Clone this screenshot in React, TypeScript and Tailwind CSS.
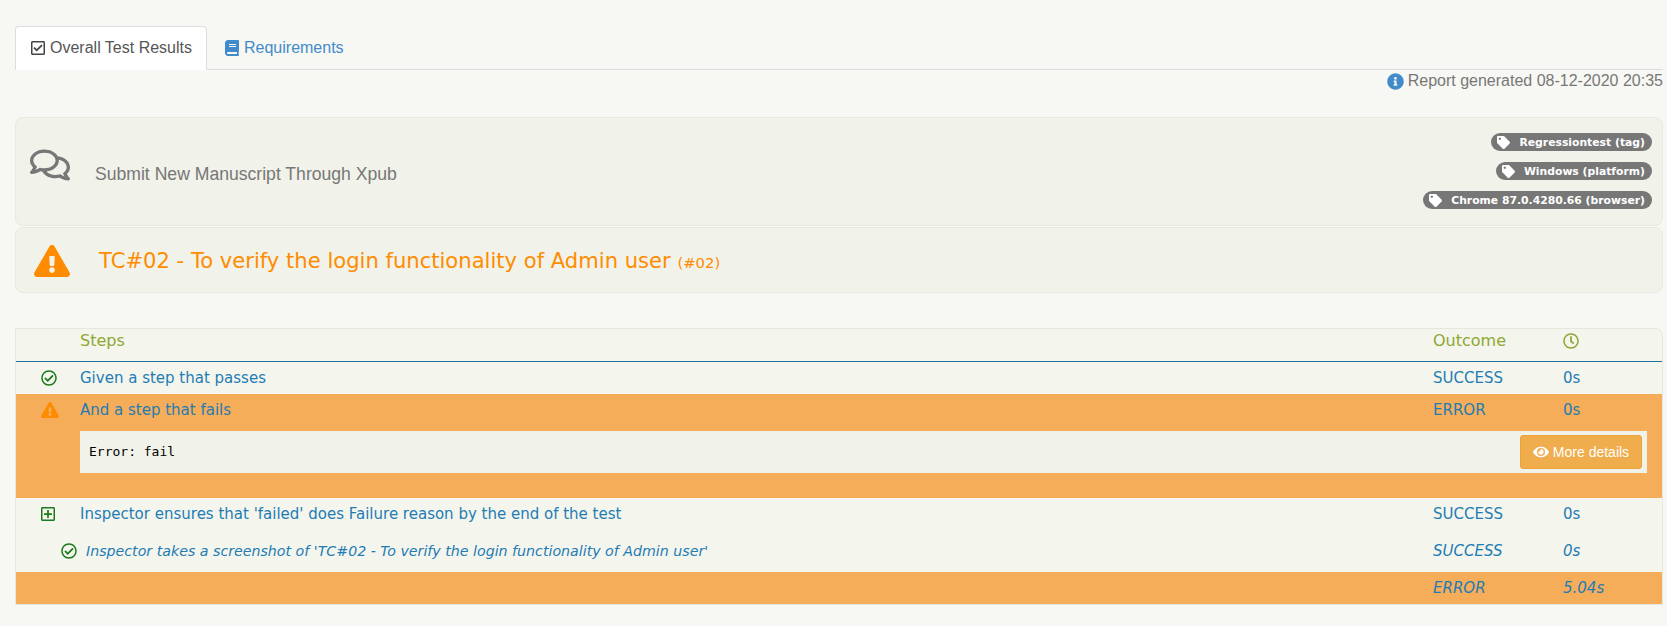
import { FaBook, FaExclamationTriangle, FaEye, FaInfoCircle, FaRegCheckCircle, FaRegCheckSquare, FaRegClock, FaRegComments, FaRegPlusSquare, FaTag } from "react-icons/fa";

const tags = ["Regressiontest (tag)", "Windows (platform)", "Chrome 87.0.4280.66 (browser)"];

function Row({ icon, label, outcome, time, italic, className }: { icon?: React.ReactNode; label?: string; outcome: string; time: React.ReactNode; italic?: boolean; className?: string }) {
  return (
    <div className={`flex items-center ${italic ? "italic" : ""} ${className ?? ""}`}>
      <div className="w-[64px] shrink-0 flex justify-center">{icon}</div>
      <div className="flex-1">{label}</div>
      <div className="w-[130px] shrink-0">{outcome}</div>
      <div className="w-[99px] shrink-0">{time}</div>
    </div>
  );
}

export default function App() {
  return (
    <div className="min-h-screen bg-[#f7f8f3] pl-[15px] pr-[4px] pt-[26px] font-['Liberation_Sans',sans-serif] text-[16px] text-[#333]">
      <div className="flex h-[44px] border-b border-[#ddd]">
        <div className="h-[44px] w-[192px] flex items-center gap-[4px] pl-[14px] pb-[1px] bg-white border border-b-0 border-[#ddd] rounded-t-[4px] text-[#555]">
          <FaRegCheckSquare className="text-[16px] text-[#444]" />
          Overall Test Results
        </div>
        <div className="flex items-center gap-[4px] pl-[17px] text-[#428bca]">
          <FaBook className="text-[16px]" />
          Requirements
        </div>
      </div>

      <div className="flex justify-end items-center gap-[4px] h-[22px] text-[#777]">
        <FaInfoCircle className="text-[17px] text-[#428bca]" />
        Report generated 08-12-2020 20:35
      </div>

      <div className="mt-[25px] h-[109px] flex items-center justify-between bg-[#f1f2e9] border border-[#e8e9e0] rounded-[8px] pl-[14px] pr-[10px]">
        <div className="flex items-center">
          <FaRegComments className="text-[40px] text-[#777] -mt-[12px]" />
          <span className="ml-[25px] pt-[6px] text-[17.6px] text-[#777]">Submit New Manuscript Through Xpub</span>
        </div>
        <div className="flex flex-col items-end gap-[11px] pb-[1px]">
          {tags.map((t) => (
            <span key={t} className="flex items-center gap-[9px] h-[18px] pl-[6px] pr-[7px] rounded-full bg-[#777] text-white text-[10.8px] font-bold font-['DejaVu_Sans',sans-serif]">
              <FaTag className="text-[13px]" />
              <span className="mt-[2px]">{t}</span>
            </span>
          ))}
        </div>
      </div>

      <div className="mt-px h-[66px] flex items-center bg-[#f1f2e9] border border-[#e8e9e0] rounded-[8px] pl-[18px]">
        <FaExclamationTriangle className="text-[36px] text-[#ff8c00] mt-[2px]" />
        <span className="ml-[29px] pt-[2px] text-[21.1px] text-[#ff8c00] font-['DejaVu_Sans',sans-serif]">
          TC#02 - To verify the login functionality of Admin user <span className="text-[14.8px]">(#02)</span>
        </span>
      </div>

      <div className="mt-[35px] border border-[#e6e7de] rounded-tr-[8px] bg-[#f4f5ed] font-['DejaVu_Sans',sans-serif] text-[15px] text-[#1f7cb4]">
        <Row
          className="h-[33px] border-b border-[#1f6f9f] text-[#8da833] text-[16px] pb-[9px]"
          label="Steps"
          outcome="Outcome"
          time={<FaRegClock className="text-[16px]" />}
        />
        <Row
          className="h-[32px]"
          icon={<FaRegCheckCircle className="text-[16px] text-[#1a7a1a] ml-[2px]" />}
          label="Given a step that passes"
          outcome="SUCCESS"
          time="0s"
        />
        <div className="bg-[#f5ad5a] h-[104px]">
          <Row
            className="h-[32px]"
            icon={<FaExclamationTriangle className="text-[18px] text-[#ff8c00] ml-[4px]" />}
            label="And a step that fails"
            outcome="ERROR"
            time="0s"
          />
          <div className="ml-[64px] mr-[15px] mt-[5px] h-[42px] bg-[#f1f2e9] flex items-center justify-between pl-[9px] pr-[5px]">
            <span className="font-['DejaVu_Sans_Mono',monospace] text-[13px] text-black">Error: fail</span>
            <button className="h-[34px] w-[122px] flex items-center justify-center gap-[4px] rounded-[3px] border border-[#eea236] bg-[#f0ad4e] font-['Liberation_Sans',sans-serif] text-[14px] text-white">
              <FaEye className="text-[16px]" />
              More details
            </button>
          </div>
        </div>
        <Row
          className="h-[32px]"
          icon={<FaRegPlusSquare className="text-[16px] text-[#1a7a1a] -ml-[1px]" />}
          label="Inspector ensures that 'failed' does Failure reason by the end of the test"
          outcome="SUCCESS"
          time="0s"
        />
        <div className="flex items-center h-[42px] italic">
          <div className="w-[64px] shrink-0 flex justify-end pr-[3px]">
            <FaRegCheckCircle className="text-[16px] text-[#1a7a1a]" />
          </div>
          <div className="flex-1 pl-[6px] pt-[1px] text-[14.2px]">Inspector takes a screenshot of 'TC#02 - To verify the login functionality of Admin user'</div>
          <div className="w-[130px] shrink-0">SUCCESS</div>
          <div className="w-[99px] shrink-0">0s</div>
        </div>
        <Row className="h-[32px] bg-[#f5ad5a]" italic outcome="ERROR" time="5.04s" />
      </div>
    </div>
  );
}
